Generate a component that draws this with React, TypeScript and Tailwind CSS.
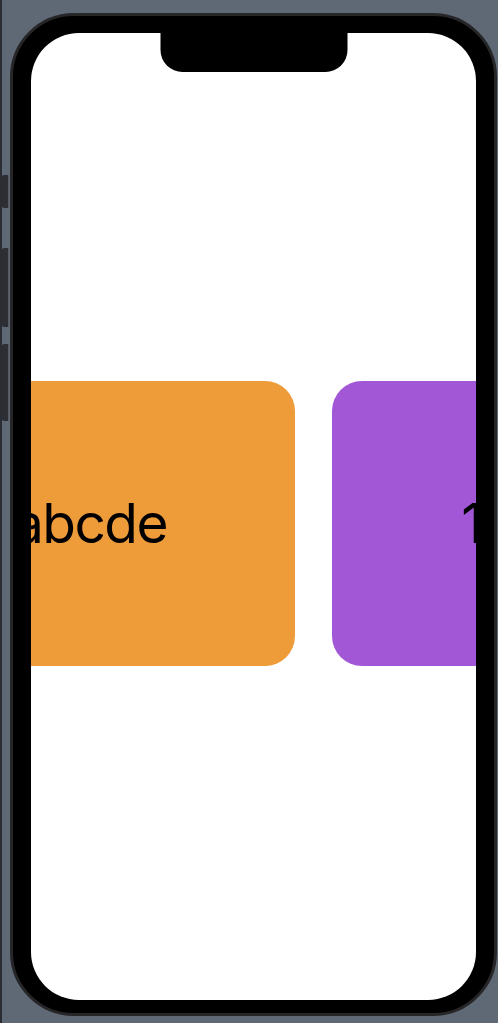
export default function App() {
  return (
    <div className="relative w-[498px] h-[1023px] overflow-hidden bg-[#5f6976] border-l-2 border-[#2a2d33]">
      {/* side buttons */}
      <div className="absolute left-0 top-[175px] h-[33px] w-[7px] rounded-l-[2px] bg-[#2c2e33] border-r border-[#55585d]" />
      <div className="absolute left-0 top-[248px] h-[79px] w-[7px] rounded-l-[2px] bg-[#2c2e33] border-r border-[#55585d]" />
      <div className="absolute left-0 top-[344px] h-[77px] w-[7px] rounded-l-[2px] bg-[#2c2e33] border-r border-[#55585d]" />

      <div className="pt-[13px] pl-[8px]">
        {/* device frame */}
        <div className="w-[487px] h-[1003px] rounded-[64px] bg-black border-[3px] border-[#262628] pt-[17px] pl-[18px]">
          {/* screen */}
          <div className="relative w-[445px] h-[967px] rounded-[48px] bg-white overflow-hidden">
            <div className="absolute left-1/2 -translate-x-1/2 top-0 w-[187px] h-[39px] rounded-b-[22px] bg-black" />

            <div className="pt-[348px] flex ml-[-146px] gap-[37px]">
              <div className="shrink-0 w-[410px] h-[285px] rounded-[30px] bg-[#ee9b39] flex items-center justify-center">
                <span className="text-[55px] leading-none tracking-[-1.5px] text-black font-['Inter',sans-serif]">abcde</span>
              </div>
              <div className="shrink-0 w-[410px] h-[285px] rounded-[30px] bg-[#a257d6] flex items-center justify-center">
                <span className="text-[55px] leading-none tracking-[-1.5px] text-black font-['Inter',sans-serif]">12345</span>
              </div>
            </div>
          </div>
        </div>
      </div>
    </div>
  );
}
